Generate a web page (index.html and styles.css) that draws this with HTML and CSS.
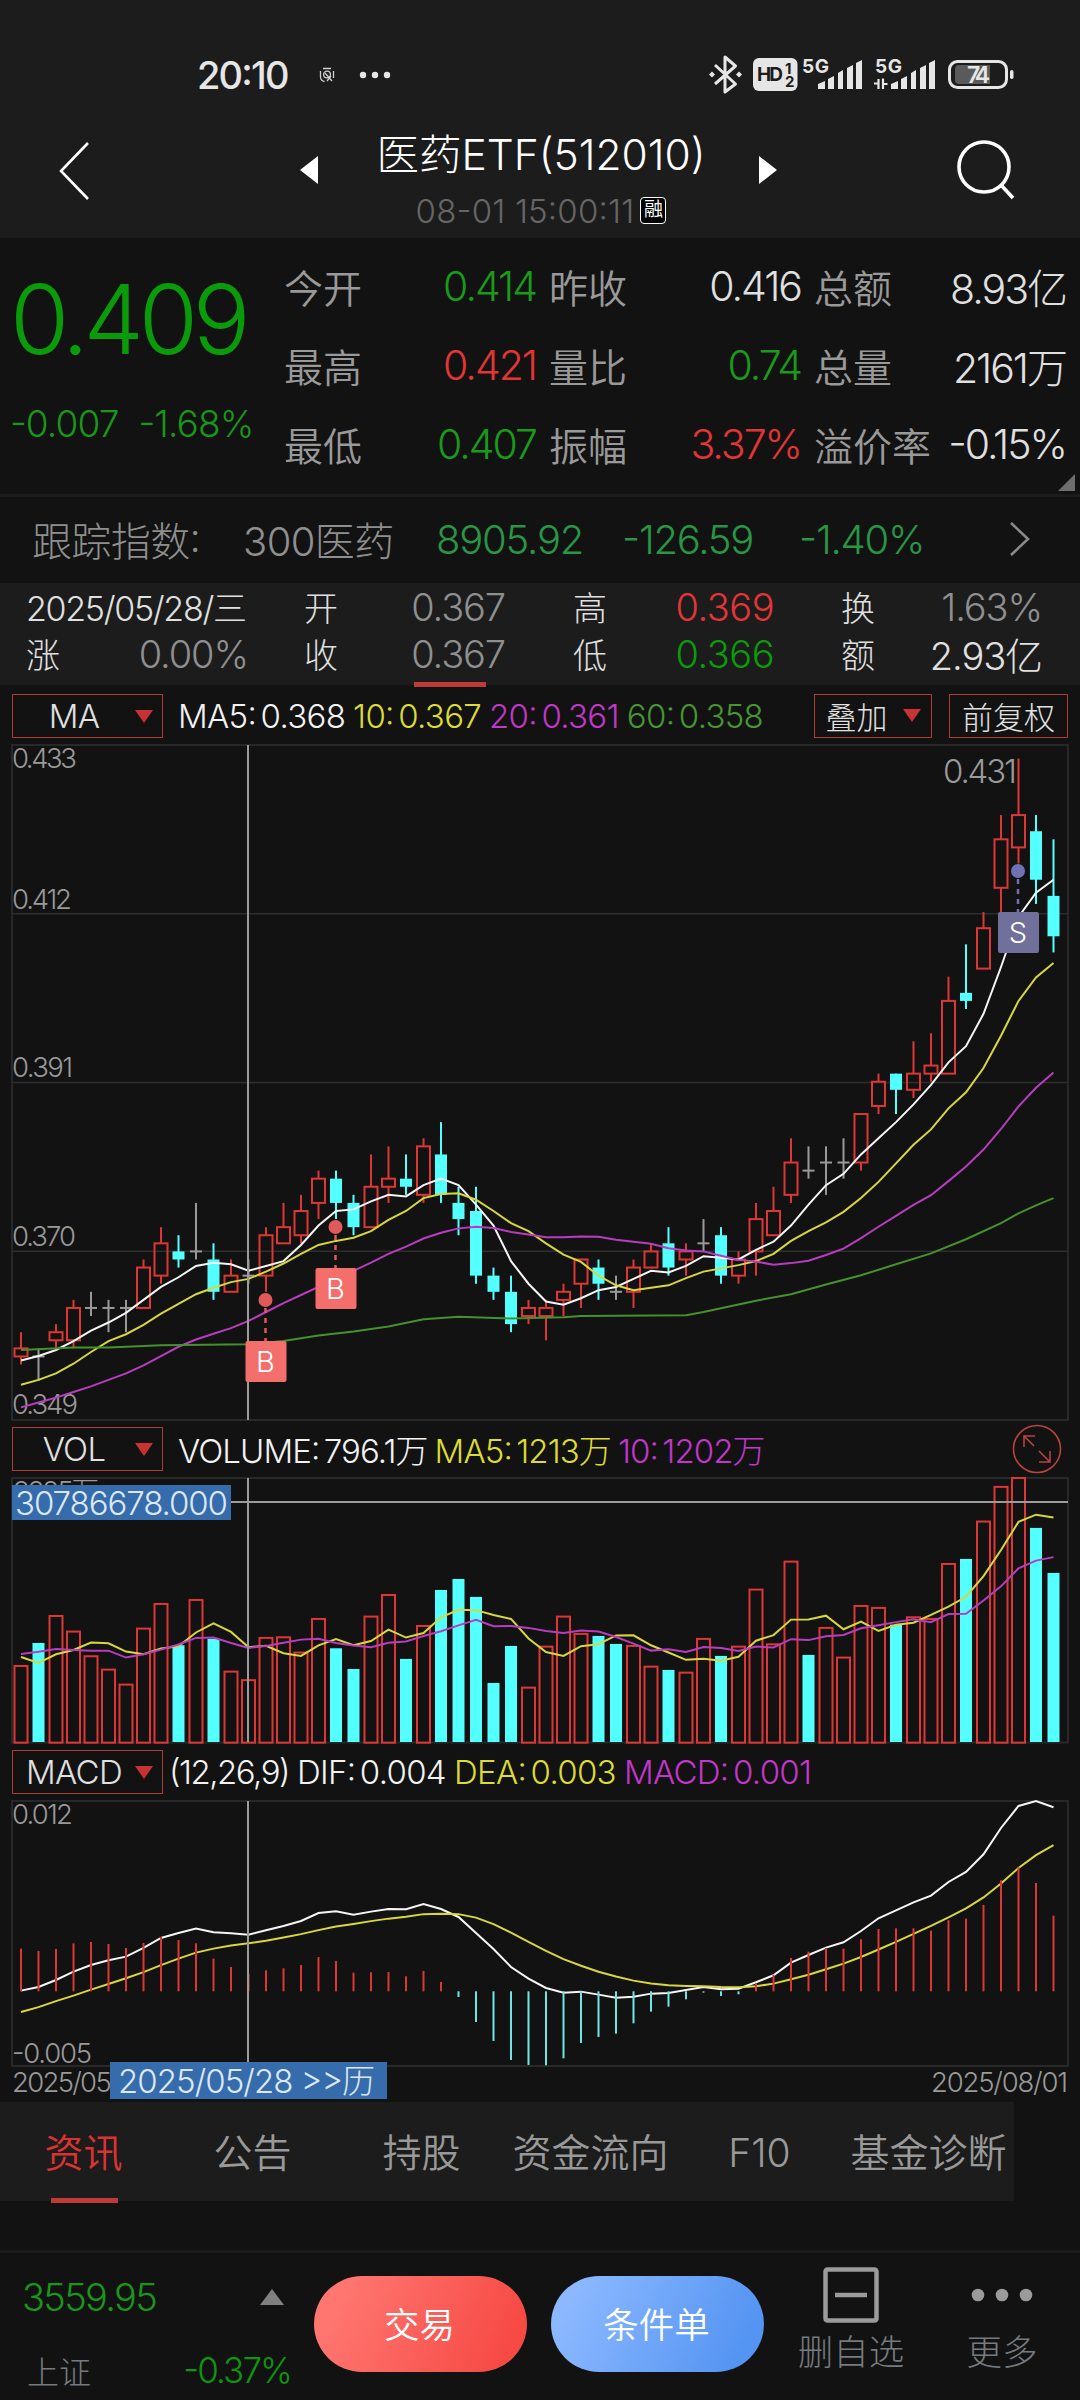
FILE: index.html
```html
<!DOCTYPE html>
<html lang="zh-CN">

<head>
    <meta charset="UTF-8">
    <meta name="viewport" content="width=device-width, initial-scale=1.0">
    <title>医药ETF(512010)</title>
    <link rel="stylesheet" href="styles.css">
</head>

<body>

    <header class="top">
        <div class="status">
            <span class="time">20:10</span>
            <svg class="status-alarm" width="16" height="16" viewBox="0 0 16 16" fill="none" stroke="#cfcfcf" stroke-width="1.3">
                <path d="M4 1.500h8M1.500 4v6a5 5 0 0 0 4 4.500M14.500 4v7" />
                <circle cx="8" cy="7.500" r="3.400" />
                <path d="M6 6l7 8M12 9l-4 5" />
            </svg>
            <svg class="status-dots" width="32" height="8" viewBox="0 0 32 8" fill="#e6e6e6">
                <circle cx="4" cy="4" r="3.200" />
                <circle cx="16" cy="4" r="3.200" />
                <circle cx="28" cy="4" r="3.200" />
            </svg>
            <svg class="status-icons" width="310" height="44" viewBox="0 0 310 44">
                <path d="M9 12l20.500 19L19 39V4l10.500 9L9 31" fill="none" stroke="#e6e6e6" stroke-width="3" stroke-linejoin="round" />
                <path d="M3 21.500l3-3 3 3-3 3zM30 21.500l3-3 3 3-3 3z" fill="#e6e6e6" />
                <rect x="47" y="5" width="44.500" height="33" rx="6" fill="#e6e6e6" />
                <text class="hd" x="51" y="28" textLength="26">HD</text>
                <text class="hd-num" x="79" y="21">1</text>
                <text class="hd-num" x="79" y="34">2</text>
                <text class="net" x="96" y="20" textLength="27">5G</text>
                <path d="M112 36v-5l7-3v8zM122 36V26l6-3v13zM132 36V20l5-3v19zM141 36V15l6-3v24zM150 36V10l6-3v29z" fill="#e6e6e6" />
                <text class="net" x="169" y="20" textLength="27">5G</text>
                <path d="M168 30.500h4.500v5.500V26M181.500 31H177v-5.500V36" fill="none" stroke="#e6e6e6" stroke-width="2.200" />
                <path d="M185 36v-5l7-3v8zM195 36V26l6-3v13zM205 36V20l5-3v19zM214 36V15l6-3v24zM223 36V10l6-3v29z" fill="#e6e6e6" />
                <rect x="243.500" y="8.500" width="57" height="26" rx="8" fill="none" stroke="#e6e6e6" stroke-width="3" />
                <path d="M253 12h31v19h-31a4 4 0 0 1-4-4V16a4 4 0 0 1 4-4z" fill="#5a5a5a" />
                <rect x="304" y="17" width="3.500" height="9" rx="1.700" fill="#e6e6e6" />
                <text class="battery" x="261" y="29.500" textLength="23">74</text>
            </svg>
        </div>
        <div class="nav">
            <svg class="back" width="32" height="60" viewBox="0 0 32 60" fill="none" stroke="#fff" stroke-width="2.600">
                <path d="M30 2L3 30l27 28" />
            </svg>
            <svg class="prev" width="18" height="28" viewBox="0 0 18 28"><path d="M18 0v28L0 14z" fill="#fff" /></svg>
            <div class="title-box">
                <h1 class="title">医药ETF(512010)</h1>
                <div class="subtitle"><span>08-01 15:00:11</span><span class="badge">融</span></div>
            </div>
            <svg class="next" width="18" height="28" viewBox="0 0 18 28"><path d="M0 0v28l18-14z" fill="#fff" /></svg>
            <svg class="search" width="60" height="60" viewBox="0 0 60 60" fill="none" stroke="#fff" stroke-width="3.600">
                <circle cx="28" cy="27" r="25" />
                <path d="M45 45l12 13" />
            </svg>
        </div>
    </header>

    <section class="quote">
        <div class="last">
            <div class="price">0.409</div>
            <div class="change"><span>-0.007</span><span>-1.68%</span></div>
        </div>
        <div class="figures">
            <div class="fig"><span>今开</span><b class="green">0.414</b></div>
            <div class="fig"><span>昨收</span><b>0.416</b></div>
            <div class="fig"><span>总额</span><b>8.93亿</b></div>
            <div class="fig"><span>最高</span><b class="red">0.421</b></div>
            <div class="fig"><span>量比</span><b class="green">0.74</b></div>
            <div class="fig"><span>总量</span><b>2161万</b></div>
            <div class="fig"><span>最低</span><b class="green">0.407</b></div>
            <div class="fig"><span>振幅</span><b class="red">3.37%</b></div>
            <div class="fig"><span>溢价率</span><b>-0.15%</b></div>
        </div>
        <i class="corner"></i>
    </section>

    <section class="index-bar">
        <span>跟踪指数:</span>
        <span>300医药</span>
        <span class="index-green">8905.92</span>
        <span class="index-green">-126.59</span>
        <span class="index-green">-1.40%</span>
        <svg width="24" height="36" viewBox="0 0 24 36" fill="none" stroke="#8a8a8a" stroke-width="2.600"><path d="M3 2l17 16L3 34" /></svg>
    </section>

    <section class="day">
        <div class="cell"><span class="date">2025/05/28/三</span></div>
        <div class="cell"><span>开</span><b>0.367</b></div>
        <div class="cell"><span>高</span><b class="red wide">0.369</b></div>
        <div class="cell"><span>换</span><b>1.63%</b></div>
        <div class="cell"><span>涨</span><b>0.00%</b></div>
        <div class="cell"><span>收</span><b>0.367</b></div>
        <div class="cell"><span>低</span><b class="green wide">0.366</b></div>
        <div class="cell"><span>额</span><b class="light">2.93亿</b></div>
        <i class="day-mark"></i>
    </section>

    <div class="legend legend-ma">
        <div class="picker"><span>MA</span><i class="down"></i></div>
        <div class="values">
            <span class="white">MA5: 0.368</span><span class="yellow">10: 0.367</span><span class="purple">20: 0.361</span><span class="lime">60: 0.358</span>
        </div>
        <div class="btn btn-overlay"><span>叠加</span><i class="down"></i></div>
        <div class="btn btn-adjust"><span>前复权</span></div>
    </div>
    <svg id="priceChart" class="chart" width="1080" height="689" viewBox="0 0 1080 689"></svg>

    <div class="legend legend-vol">
        <div class="picker"><span>VOL</span><i class="down"></i></div>
        <div class="values">
            <span class="white">VOLUME: 796.1万</span><span class="yellow">MA5: 1213万</span><span class="purple">10: 1202万</span>
        </div>
        <svg class="expand" width="50" height="50" viewBox="0 0 50 50" fill="none" stroke="#b8433f" stroke-width="1.600">
            <circle cx="25" cy="25" r="23.500" />
            <path d="M12 23V12h11M12 12l10 10M27 27l11 11M38 27v11H27" />
        </svg>
    </div>
    <svg id="volChart" class="chart" width="1080" height="279" viewBox="0 0 1080 279"></svg>

    <div class="legend legend-macd">
        <div class="picker"><span>MACD</span><i class="down"></i></div>
        <div class="values">
            <span class="white params">(12,26,9)</span><span class="white">DIF: 0.004</span><span class="yellow">DEA: 0.003</span><span class="purple">MACD: 0.001</span>
        </div>
    </div>
    <svg id="macdChart" class="chart" width="1080" height="308" viewBox="0 0 1080 308"></svg>

    <nav class="tabs">
        <span class="tab active">资讯</span>
        <span class="tab">公告</span>
        <span class="tab">持股</span>
        <span class="tab">资金流向</span>
        <span class="tab">F10</span>
        <span class="tab">基金诊断</span>
    </nav>

    <footer class="bottom">
        <div class="market">
            <div class="market-row"><span class="sz-last">3559.95</span><i class="up"></i></div>
            <div class="market-row"><span class="sz-name">上证</span><span class="sz-pct">-0.37%</span></div>
        </div>
        <button class="pill trade">交易</button>
        <button class="pill order">条件单</button>
        <div class="action remove">
            <svg width="56" height="56" viewBox="0 0 56 56" fill="none" stroke="#9b9b9b" stroke-width="4.500"><rect x="2.500" y="2.500" width="51" height="51" rx="2" /><path d="M12 28h32" /></svg>
            <span>删自选</span>
        </div>
        <div class="action more">
            <svg width="62" height="56" viewBox="0 0 62 56" fill="#9b9b9b"><circle cx="7" cy="28" r="6.300" /><circle cx="31" cy="28" r="6.300" /><circle cx="55" cy="28" r="6.300" /></svg>
            <span>更多</span>
        </div>
    </footer>

    <script src="chart.js"></script>
</body>
</html>
```
FILE: styles.css
```css
body {
    margin: 0;
    width: 1080px;
    height: 2400px;
    overflow: hidden;
    background-color: #121212;
    color: #e0e0e0;
    font-family: 'Inter', 'Noto Sans CJK SC', sans-serif;
    font-weight: 300;
    font-feature-settings: 'case';
    white-space: nowrap;
}

b {
    font-weight: 300;
}

svg {
    display: block;
    flex: none;
}

.green {
    color: #1a9a1a;
}

.red {
    color: #e33535;
}

.white {
    color: #f2f2f2;
}

.yellow {
    color: #dcdc32;
}

.purple {
    color: #c336cb;
}

.lime {
    color: #469632;
}

/* header */

.top {
    height: 238px;
    background-color: #1c1c1c;
}

.status {
    display: flex;
    align-items: center;
    height: 70px;
    padding: 40px 0 0 197px;
}

.time {
    width: 122px;
    font-size: 38px;
    font-weight: 500;
    letter-spacing: -1.8px;
    color: #e6e6e6;
}

.status-dots {
    margin-left: 24px;
}

.status-icons {
    margin-left: 315px;
}

.hd,
.hd-num,
.net {
    font-size: 19px;
    font-weight: 700;
    fill: #e6e6e6;
}

.hd {
    fill: #1c1c1c;
}

.hd-num {
    font-size: 15px;
    fill: #1c1c1c;
}

.battery {
    font-size: 23px;
    font-weight: 600;
    fill: #e6e6e6;
}

.nav {
    display: flex;
    align-items: flex-start;
    padding-left: 58px;
}

.back {
    margin-top: 31px;
}

.prev,
.next {
    margin-top: 46px;
}

.prev {
    margin-left: 210px;
}

.title-box {
    width: 436px;
    padding: 17px 0 0 5px;
    text-align: center;
}

.title {
    margin: 0;
    font-size: 42.500px;
    font-weight: 300;
    line-height: 56px;
    color: #fff;
}

.subtitle {
    display: flex;
    justify-content: center;
    align-items: center;
    gap: 6px;
    height: 55px;
    font-size: 33px;
    letter-spacing: 0.2px;
    color: #666;
}

.badge {
    width: 24px;
    height: 25px;
    border: 1.5px solid #fff;
    border-radius: 4px;
    background-color: #000;
    color: #fff;
    font-size: 19px;
    font-weight: 400;
    line-height: 24px;
    letter-spacing: 0;
}

.search {
    margin: 30px 0 0 179px;
}

/* quote */

.quote {
    position: relative;
    display: flex;
    height: 256px;
}

.last {
    width: 274px;
    padding-left: 10px;
    color: #0a9b0a;
}

.price {
    margin-top: 26px;
    font-size: 96px;
    line-height: 110px;
    letter-spacing: -5.2px;
}

.change {
    display: flex;
    gap: 20px;
    margin-top: 30px;
    font-size: 37px;
    line-height: 40px;
    letter-spacing: -0.9px;
    color: #1a961a;
}

.figures {
    display: grid;
    grid-template-columns: repeat(3, 252px);
    grid-auto-rows: 79px;
    column-gap: 13px;
    padding-top: 8px;
}

.fig {
    display: flex;
    justify-content: space-between;
    align-items: center;
    font-size: 41px;
    letter-spacing: -2px;
}

.fig span {
    font-size: 39px;
    font-weight: 350;
    letter-spacing: 0;
    color: #999;
}

.corner {
    position: absolute;
    right: 5px;
    bottom: 3px;
    border-left: 17px solid transparent;
    border-bottom: 17px solid #6e6e6e;
}

.index-bar {
    display: grid;
    grid-template-columns: 211px 193px 186px 177px 209px 24px;
    align-items: center;
    height: 84px;
    padding: 0 0 2px 32px;
    border-top: 3px solid #1c1c1c;
    font-size: 40px;
    letter-spacing: -0.6px;
    color: #8f8f8f;
}

.index-green {
    letter-spacing: -1.2px;
    color: #289646;
}

/* figures of the selected day */

.day {
    position: relative;
    display: grid;
    grid-template-columns: 278px 269px 268px 202px;
    grid-auto-rows: 47px;
    height: 102px;
    padding: 0 0 0 26px;
    background-color: #1c1c1c;
}

.cell {
    display: flex;
    justify-content: space-between;
    align-items: center;
    width: 201px;
    font-size: 38px;
    letter-spacing: -1.1px;
}

.cell:nth-child(4n+1) {
    width: 222px;
}

.cell span {
    font-size: 34px;
}

.cell b {
    color: #8f8f8f;
}

.cell .date {
    letter-spacing: -1.3px;
}

.cell .red {
    color: #e33535;
}

.cell .green {
    color: #0a9b0a;
}

.cell .light {
    color: #e0e0e0;
}

.cell .wide {
    letter-spacing: -0.5px;
}

.day-mark {
    position: absolute;
    left: 414px;
    bottom: -2px;
    width: 72px;
    height: 5px;
    background-color: #c13a3a;
}

/* indicator rows above each chart */

.legend {
    display: flex;
    align-items: center;
    height: 44px;
    padding: 0 12px;
    font-size: 33px;
    letter-spacing: -0.7px;
    word-spacing: -4px;
}

.legend-ma {
    padding-top: 9px;
}

.picker,
.btn {
    box-sizing: border-box;
    display: flex;
    align-items: center;
    height: 44px;
    border: 1.5px solid #ac3c3a;
}

.picker {
    width: 151px;
}

.picker span {
    width: 122px;
    text-align: center;
}

.down {
    border-left: 9px solid transparent;
    border-right: 9px solid transparent;
    border-top: 13px solid #c83232;
}

.values {
    display: flex;
    gap: 8px;
    margin-left: 15px;
}

.legend-vol .values {
    letter-spacing: -0.9px;
    gap: 7px;
}

.legend-macd .values {
    margin-left: 6px;
}

.params {
    letter-spacing: -1.5px;
}

.btn {
    justify-content: center;
    gap: 15px;
    padding-bottom: 2px;
    font-size: 31px;
    letter-spacing: 0;
}

.btn-overlay {
    width: 118px;
    margin-left: auto;
}

.btn-adjust {
    width: 119px;
    margin-left: 17px;
}

.expand {
    margin: 0 6px 0 auto;
}

/* charts */

.axis {
    font-size: 27.500px;
    fill: #999;
}

.peak {
    font-size: 33px;
    fill: #999;
}

.tag {
    font-size: 33px;
    fill: #dce8f5;
}

.mark {
    font-size: 29px;
    fill: #fff;
    text-anchor: middle;
}

/* tabs */

.tabs {
    display: flex;
    width: 1014px;
    height: 99px;
    background-color: #1c1c1c;
}

.tab {
    position: relative;
    width: 169px;
    font-size: 39px;
    font-weight: 350;
    line-height: 101px;
    text-align: center;
    text-indent: -2px;
    color: #999;
}

.tab.active {
    color: #dc3232;
}

.tab.active::after {
    content: '';
    position: absolute;
    left: 51px;
    bottom: -2px;
    width: 67px;
    height: 5px;
    background-color: #c13a3a;
}

/* bottom bar */

.bottom {
    display: flex;
    height: 147px;
    margin-top: 49px;
    border-top: 3px solid #1c1c1c;
}

.market {
    width: 262px;
    margin-left: 22px;
    padding-top: 7px;
}

.market-row {
    display: flex;
    justify-content: space-between;
    align-items: center;
    height: 73px;
}

.sz-last {
    font-size: 38px;
    letter-spacing: -1.7px;
    color: #1a961a;
}

.up {
    border-left: 12px solid transparent;
    border-right: 12px solid transparent;
    border-bottom: 16px solid #808080;
}

.sz-name {
    padding-left: 5px;
    font-size: 32px;
    color: #757b80;
}

.sz-pct {
    margin-right: -7px;
    font-size: 35px;
    letter-spacing: -1.9px;
    color: #0f960f;
}

.pill {
    width: 213px;
    height: 96px;
    margin: 23px 0 0 24px;
    padding: 0 2px 4px 0;
    border: none;
    border-radius: 48px;
    font: inherit;
    font-size: 35.500px;
    font-weight: 350;
    color: #fff;
}

.pill.trade {
    margin-left: 30px;
    background-image: linear-gradient(115deg, #ff756f 15%, #f74a45 88%);
}

.pill.order {
    background-image: linear-gradient(115deg, #8bb8ff 12%, #5494f2 88%);
}

.action {
    display: flex;
    flex-direction: column;
    align-items: center;
    width: 120px;
    padding-top: 14px;
    font-size: 35.500px;
    line-height: 60px;
    color: #757b80;
}

.remove {
    margin-left: 27px;
}

.more {
    margin-left: 31px;
}
```
FILE: chart.js
```js
const RED = '#dc3735';
const CYAN = '#54ffff';
const GRAY = '#999';
const STEP = 17.5;

// open, high, low, close in 0.001
const candles = [
    [357, 360, 356, 358], [357, 358, 354, 357], [359, 361, 358, 360], [359, 364, 358, 363], [363, 365, 362, 363],
    [363, 364, 360, 363], [363, 364, 360, 363], [363, 369, 363, 368], [367, 373, 366, 371], [370, 372, 368, 369],
    [370, 376, 369, 370], [369, 371, 364, 365], [365, 369, 365, 367], [367, 369, 366, 367], [367, 373, 365, 372],
    [371, 376, 371, 373], [372, 377, 371, 375], [376, 380, 374, 379], [379, 380, 374, 376], [376, 377, 372, 373],
    [373, 382, 373, 378], [378, 383, 376, 379], [379, 382, 377, 378], [377, 384, 376, 383], [382, 386, 376, 377],
    [376, 378, 372, 374], [375, 378, 366, 367], [367, 368, 364, 365], [365, 367, 360, 361], [362, 364, 361, 363],
    [362, 364, 359, 363], [364, 366, 362, 365], [366, 369, 363, 369], [368, 369, 364, 366], [365, 367, 364, 365],
    [365, 369, 363, 368], [368, 371, 368, 370], [371, 373, 367, 368], [369, 371, 367, 370], [371, 374, 370, 371],
    [372, 373, 366, 367], [367, 370, 366, 369], [370, 376, 367, 374], [372, 378, 372, 375], [377, 384, 376, 381],
    [380, 383, 379, 380], [381, 383, 377, 381], [381, 384, 379, 381], [381, 387, 380, 387], [388, 392, 387, 391],
    [392, 392, 387, 390], [390, 396, 389, 392], [392, 397, 391, 393], [392, 404, 392, 401], [402, 408, 400, 401],
    [405, 412, 405, 410], [415, 424, 412, 421], [420, 431, 418, 424], [422, 424, 413, 416], [414, 421, 407, 409]
];

// in 万
const volumes = [
    978, 1272, 1618, 1418, 1102, 931, 739, 1456, 1772, 1243,
    1823, 1324, 905, 796, 1337, 1345, 1149, 1580, 1204, 939,
    1610, 1887, 1068, 1490, 1951, 2092, 1862, 760, 1234, 700,
    1225, 1610, 1388, 1362, 1260, 1234, 969, 927, 892, 1324,
    1106, 1225, 1956, 1255, 2314, 1119, 1465, 1085, 1746, 1721,
    1507, 1601, 1580, 2284, 2348, 2827, 3271, 3385, 2746, 2169
];

const dif = [
    2, 13, 34, 59, 79, 93, 104, 130, 160, 175, 188, 177, 174, 170, 183, 196, 211, 235, 240, 230,
    239, 247, 246, 262, 247, 223, 175, 127, 73, 38, 10, -4, -1, -10, -19, -16, -7, -5, 4, 13,
    6, 8, 27, 48, 86, 109, 131, 147, 181, 219, 243, 267, 287, 328, 358, 411, 490, 556, 571, 552
];

const macd = [
    128, 121, 127, 144, 148, 142, 130, 145, 163, 154, 144, 98, 73, 52, 63, 69, 79, 103, 91, 56,
    57, 58, 45, 61, 28, -17, -92, -149, -206, -221, -222, -201, -155, -137, -127, -96, -61, -46, -24, -4,
    -14, -9, 24, 50, 100, 119, 130, 128, 156, 187, 189, 189, 182, 213, 218, 259, 333, 372, 325, 227
];

// averages that start before the first visible day
const ma5Head = [356.5, 357.05, 357.8, 358.9];
const ma10Head = [353.5, 354.1, 354.9, 356.1, 357.55, 358.9, 359.75, 360.9, 362.3];
const ma20Head = [350.7, 351.3, 351.9, 352.6, 353.3, 354.1, 354.9, 355.9, 357.05, 358.2, 359.1, 359.8, 360.5, 361.4, 362.5, 363.6, 364.6, 365.6, 366.7];
const ma60Points = [
    [0, 357.8], [3, 358.1], [5, 358.1], [8, 358.4], [13, 358.5], [15, 358.9], [17, 359.6], [19, 360.1], [21, 360.7], [23, 361.6],
    [25, 361.9], [28, 361.7], [31, 361.85], [32, 362], [38, 362.1], [39, 362.5], [42, 363.9], [44, 364.7], [46, 365.9],
    [48, 367.05], [50, 368.4], [52, 369.75], [54, 371.5], [56, 373.5], [57, 374.7], [58, 375.7], [59, 376.6]
];
const vol5Head = [1093, 1016, 1127, 1183];
const vol10Head = [1132, 1161, 1196, 1183, 1174, 1174, 1085, 1127, 1187];

function x(i) {
    return 21 + STEP * i;
}

function average(list, days, head) {
    return list.map((value, i) => {
        if (i < head.length) return head[i];
        return list.slice(i - days + 1, i + 1).reduce((a, b) => a + b) / days;
    });
}

function rect(left, top, width, height, fill) {
    return `<rect x="${left}" y="${top}" width="${width}" height="${height}" fill="${fill}"/>`;
}

function box(left, top, width, height, color) {
    return `<rect x="${left}" y="${top}" width="${width}" height="${height}" fill="none" stroke="${color}" stroke-width="2"/>`;
}

function curve(points, color) {
    return `<polyline points="${points.map(p => p.join(',')).join(' ')}" fill="none" stroke="${color}" stroke-width="2"/>`;
}

function label(cls, left, baseline, text, length) {
    return `<text class="${cls}" x="${left}" y="${baseline}" textLength="${length}">${text}</text>`;
}

function mark(i, dotY, boxY, text, dotColor, boxColor) {
    const cx = x(i) - 0.5;
    return `<path d="M${cx} ${dotY + 8}V${boxY}" stroke="${dotColor}" stroke-width="2.5" stroke-dasharray="5 5"/>`
        + `<circle cx="${cx}" cy="${dotY}" r="7" fill="${dotColor}"/>`
        + `<rect x="${cx - 20}" y="${boxY}" width="41" height="41" rx="2" fill="${boxColor}"/>`
        + `<text class="mark" x="${cx}" y="${boxY + 31}">${text}</text>`;
}

function isDown(i) {
    const [open, , , close] = candles[i];
    if (open !== close) return close < open;
    return i > 0 && close < candles[i - 1][3];
}

function drawPrice() {
    const grid = p => 7 + (433 - p) * 8.036;
    const y = p => 473 - (p - 375) * 8.08;
    const closes = candles.map(c => c[3]);
    let svg = box(12, 7, 1056, 675, '#282828');

    [412, 391, 370].forEach(p => svg += rect(12, grid(p) - 0.75, 1056, 1.5, '#2e2e2e'));
    svg += label('axis', 12, 30, '0.433', 65) + label('axis', 12, 171, '0.412', 60) + label('axis', 12, 339, '0.391', 61)
        + label('axis', 12, 508, '0.370', 64) + label('axis', 12, 676, '0.349', 66);
    svg += label('peak', 943, 45, '0.431', 74);

    candles.forEach(([open, high, low, close], i) => {
        const top = y(Math.max(open, close));
        const bottom = y(Math.min(open, close));
        if (open === close) {
            svg += rect(x(i) - 1, y(high), 2, y(low) - y(high), GRAY) + rect(x(i) - 6, top - 1, 12, 2, GRAY);
        } else if (close < open) {
            svg += rect(x(i) - 1, y(high), 2, y(low) - y(high), CYAN) + rect(x(i) - 6, top, 12, bottom - top, CYAN);
        } else {
            svg += rect(x(i) - 1, y(high), 2, top - y(high), RED) + rect(x(i) - 1, bottom, 2, y(low) - bottom, RED);
            svg += box(x(i) - 6.5, top, 13, bottom - top, RED);
        }
    });

    svg += curve(average(closes, 5, ma5Head).map((v, i) => [x(i), y(v)]), '#f5f5f5');
    svg += curve(average(closes, 10, ma10Head).map((v, i) => [x(i), y(v)]), '#d8d83c');
    svg += curve(average(closes, 20, ma20Head).map((v, i) => [x(i), y(v)]), '#b93cc0');
    svg += curve(ma60Points.map(([i, v]) => [x(i), y(v)]), '#46912d');
    svg += rect(247, 7, 2, 675, '#9b9b9b');
    svg += mark(14, 562, 603, 'B', '#e15a5a', '#f46e6c');
    svg += mark(18, 489, 530, 'B', '#e15a5a', '#f46e6c');
    svg += mark(57, 133, 174, 'S', '#7070b4', '#70709b');
    document.getElementById('priceChart').innerHTML = svg;
}

function drawVolume() {
    const y = v => 271.3 - v / 3385 * 264.3;
    let svg = box(12, 7, 1056, 264.5, '#282828');

    svg += label('axis', 13, 30, '3385万', 86);
    volumes.forEach((v, i) => {
        if (isDown(i)) svg += rect(x(i) - 6, y(v), 12, 271 - y(v), CYAN);
        else svg += box(x(i) - 6.5, y(v), 13, 271.7 - y(v), RED);
    });
    svg += curve(average(volumes, 5, vol5Head).map((v, i) => [x(i), y(v)]), '#d8d83c');
    svg += curve(average(volumes, 10, vol10Head).map((v, i) => [x(i), y(v)]), '#b93cc0');
    svg += rect(247, 7, 2, 264, '#9b9b9b') + rect(12, 30, 1056, 2, '#9b9b9b');
    svg += rect(12, 14, 219, 35, '#366cab') + label('tag', 15, 43.5, '30786678.000', 213);
    document.getElementById('volChart').innerHTML = svg;
}

function drawMacd() {
    const y = v => 197.3 - v / 3;
    let svg = box(12, 7, 1056, 265, '#282828');

    svg += label('axis', 12, 30, '0.012', 61) + label('axis', 12, 269, '-0.005', 80);
    svg += curve(dif.map((v, i) => [x(i), y(v)]), '#f5f5f5');
    svg += curve(dif.map((v, i) => [x(i), y(v - macd[i] / 2)]), '#d8d83c');
    macd.forEach((v, i) => {
        svg += rect(x(i) - 1, Math.min(y(v), y(0)), 2, Math.abs(v) / 3, v > 0 ? RED : '#6ee6e6');
    });
    svg += rect(247, 7, 2, 261, '#9b9b9b');
    svg += label('axis', 12, 298, '2025/05/07', 136) + label('axis', 931, 298, '2025/08/01', 137);
    svg += rect(110, 268, 277, 37, '#366cab') + label('tag', 118, 299, '2025/05/28 &gt;&gt;历', 257);
    document.getElementById('macdChart').innerHTML = svg;
}

drawPrice();
drawVolume();
drawMacd();
```
